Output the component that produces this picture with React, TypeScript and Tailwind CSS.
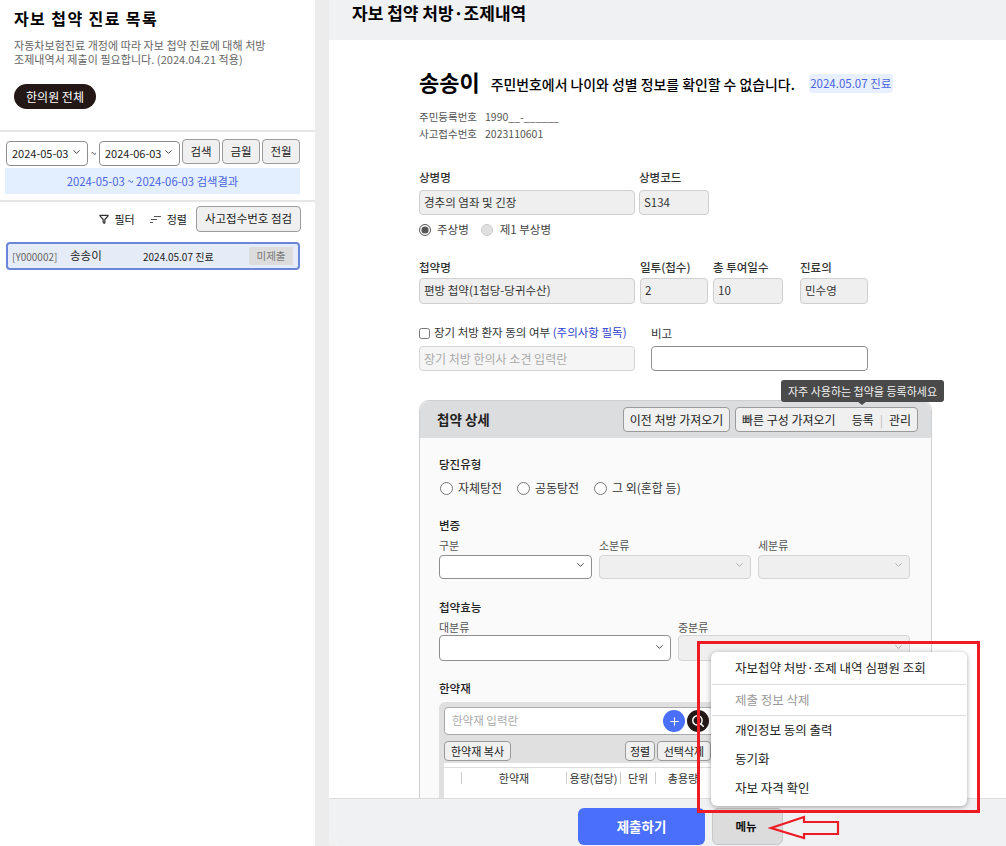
import { ChevronDown, Filter, Plus, Search } from "lucide-react"

const inputBase = "h-full w-full rounded-[4px] border px-[6px] text-[12px] outline-none"

function ReadBox({ value, className }: { value: string; className: string }) {
  return (
    <div className={`flex items-center rounded-[4px] border border-[#cfcfcf] bg-[#efefef] px-[4px] text-[11.5px] text-[#333] ${className}`}>
      {value}
    </div>
  )
}

function Field({ label, className, value, tall }: { label: string; className: string; value: string; tall?: boolean }) {
  return (
    <div className={className}>
      <div className={`h-[17px] text-[11.5px] font-medium leading-[17px] text-[#333] ${tall ? "mb-[2px]" : "mb-[4px]"}`}>{label}</div>
      <ReadBox value={value} className={`w-full ${tall ? "h-[26px]" : "h-[25px]"}`} />
    </div>
  )
}

function GrayButton({ children, className = "" }: { children: React.ReactNode; className?: string }) {
  return (
    <button className={`flex items-center justify-center rounded-[4px] border border-[#9a9a9a] bg-[#f0f0f0] text-[12px] text-[#222] ${className}`}>
      {children}
    </button>
  )
}

function Dropdown({ disabled, value, className }: { disabled?: boolean; value?: string; className: string }) {
  return (
    <div className={`relative ${className}`}>
      <select
        disabled={disabled}
        className={`h-full w-full appearance-none rounded-[4px] border pl-[5px] text-[11px] text-[#222] ${disabled ? "border-[#d5d5d5] bg-[#efefef]" : "border-[#8f8f8f] bg-white"}`}
      >
        {value && <option>{value}</option>}
      </select>
      <ChevronDown
        size={11}
        strokeWidth={2}
        className={`pointer-events-none absolute right-[6px] top-1/2 -translate-y-1/2 ${disabled ? "text-[#aaa]" : "text-[#333]"}`}
      />
    </div>
  )
}

function SelectBox({ label, disabled, className }: { label: string; disabled?: boolean; className: string }) {
  return (
    <div className={className}>
      <div className="h-[16px] text-[11px] leading-[16px] text-[#555]">{label}</div>
      <Dropdown disabled={disabled} className="h-[24px] w-full" />
    </div>
  )
}

function Sidebar() {
  return (
    <aside className="flex w-[315px] shrink-0 flex-col bg-white">
      <div className="h-[132px] border-b-2 border-[#e6e6e6] pl-[14px] pt-[7px]">
        <h1 className="text-[16px] font-bold leading-[22px] tracking-[1.4px] text-black">자보 첩약 진료 목록</h1>
        <p className="mt-[9px] text-[11px] leading-[14px] tracking-[0.05px] text-[#666]">
          자동차보험진료 개정에 따라 자보 첩약 진료에 대해 처방
          <br />
          조제내역서 제출이 필요합니다. (2024.04.21 적용)
        </p>
        <button className="mt-[18px] flex h-[25px] w-[82px] items-center justify-center rounded-full bg-[#231815] text-[12px] text-white">
          한의원 전체
        </button>
      </div>
      <div className="flex h-[32px] items-end gap-[2px] pl-[6px]">
        <Dropdown value="2024-05-03" className="h-[25px] w-[82px]" />
        <span className="w-[7px] text-center text-[10px] leading-[22px] text-[#555]">~</span>
        <Dropdown value="2024-06-03" className="h-[25px] w-[81px]" />
        <GrayButton className="h-[25px] w-[38px] !text-[11.5px]">검색</GrayButton>
        <GrayButton className="h-[25px] w-[38px] !text-[11.5px]">금월</GrayButton>
        <GrayButton className="h-[25px] w-[38px] !text-[11.5px]">전월</GrayButton>
      </div>
      <div className="ml-[5px] mt-[4px] flex h-[26px] w-[295px] items-center justify-center bg-[#e3efff] text-[11.3px] text-[#4a63e0]">
        2024-05-03 ~ 2024-06-03 검색결과
      </div>
      <div className="mt-[6px] flex h-[32px] items-end justify-end border-t-2 border-[#e6e6e6] pr-[14px]">
        <div className="flex items-center gap-[4px] text-[11px] text-[#222]">
          <Filter size={10} strokeWidth={3} className="text-[#333]" />
          <span className="ml-[2px]">필터</span>
          <svg width="11" height="8" viewBox="0 0 11 8" className="ml-[11px]">
            <path d="M4 1.5h7M1 4.5h6M0 7.5h3" stroke="#555" strokeWidth="1" fill="none" />
          </svg>
          <span className="ml-[2px]">정렬</span>
          <GrayButton className="ml-[5px] h-[26px] w-[105px] !text-[11.5px]">사고접수번호 점검</GrayButton>
        </div>
      </div>
      <div className="ml-[6px] mt-[10px] flex h-[28px] w-[294px] items-center rounded-[4px] border-2 border-[#6a86d8] bg-[#e6ecf7] pl-[4px]">
        <span className="w-[58px] text-[10px] text-[#666]">[Y000002]</span>
        <span className="w-[73px] text-[11.5px] text-[#222]">송송이</span>
        <span className="w-[106px] text-[10px] text-[#222]">2024.05.07 진료</span>
        <span className="flex h-[18px] w-[44px] items-center justify-center bg-[#dcdcdc] text-[10.5px] text-[#777]">미제출</span>
      </div>
    </aside>
  )
}

function PrescriptionForm() {
  return (
    <div className="w-[513px]">
      <div className="flex h-[32px] items-end">
        <span className="text-[22px] font-bold leading-[30px] text-black">송송이</span>
        <span className="ml-[11px] text-[13.9px] font-medium leading-[24px] text-black">주민번호에서 나이와 성별 정보를 확인할 수 없습니다.</span>
        <span className="mb-[3px] ml-[14px] flex h-[19px] w-[84px] items-center justify-center rounded-[4px] bg-[#e8f0ff] text-[11.5px] text-[#4a63e0]">2024.05.07 진료</span>
      </div>
      <div className="mt-[12px] text-[10.5px] leading-[17px] text-[#555]">
        <div className="flex"><span className="w-[66px]">주민등록번호</span><span>1990__-______</span></div>
        <div className="flex"><span className="w-[66px]">사고접수번호</span><span>2023110601</span></div>
      </div>

      <div className="mt-[27px] flex gap-[4px]">
        <Field label="상병명" className="w-[216px]" value="경추의 염좌 및 긴장" />
        <Field label="상병코드" className="w-[70px]" value="S134" />
      </div>
      <div className="mt-[7px] flex h-[16px] items-center text-[11.5px] text-[#444]">
        <input type="radio" checked readOnly className="size-[12px] accent-[#555]" />
        <span className="ml-[6px]">주상병</span>
        <input type="radio" disabled className="ml-[12px] size-[12px] appearance-none rounded-full border border-[#ccc] bg-[#e0e0e0]" />
        <span className="ml-[7px]">제1 부상병</span>
      </div>

      <div className="mt-[21px] flex">
        <Field tall label="첩약명" className="w-[216px]" value="편방 첩약(1첩당-당귀수산)" />
        <Field tall label="일투(첩수)" className="ml-[5px] w-[68px]" value="2" />
        <Field tall label="총 투여일수" className="ml-[5px] w-[70px]" value="10" />
        <Field tall label="진료의" className="ml-[17px] w-[68px]" value="민수영" />
      </div>

      <div className="mt-[20px] flex">
        <div className="w-[216px]">
          <label className="flex h-[18px] items-center gap-[4px] text-[11.5px] text-[#333]">
            <input type="checkbox" className="size-[11px]" />
            <span>장기 처방 환자 동의 여부 <span className="text-[#2f3fd0]">(주의사항 필독)</span></span>
          </label>
          <div className="mt-[3px] h-[25px]">
            <input disabled placeholder="장기 처방 한의사 소견 입력란" className={`${inputBase} border-[#d5d5d5] bg-[#f5f5f5] !px-[4px] text-[11.5px] placeholder:text-[#aaa]`} />
          </div>
        </div>
        <div className="ml-[16px] w-[217px]">
          <div className="h-[18px] text-[11.5px] leading-[18px] text-[#333]">비고</div>
          <div className="mt-[3px] h-[25px]">
            <input className={`${inputBase} border-[#8f8f8f] bg-white`} />
          </div>
        </div>
      </div>

      <section className="mt-[30px] rounded-t-[10px] border border-[#cfcfcf] bg-[#fafafa]">
        <div className="flex h-[37px] items-center rounded-t-[10px] bg-[#dcdddf] pl-[17px] pr-[13px]">
          <h2 className="flex-1 text-[13.5px] font-bold text-[#222]">첩약 상세</h2>
          <GrayButton className="h-[25px] w-[107px]">이전 처방 가져오기</GrayButton>
          <GrayButton className="ml-[5px] h-[25px] w-[183px]">
            빠른 구성 가져오기
            <span className="ml-[16px]">등록</span>
            <span className="mx-[6px] text-[#bbb]">|</span>
            <span>관리</span>
          </GrayButton>
        </div>
        <div className="pl-[19px] pr-[21px] pt-[18px]">
          <h3 className="h-[17px] text-[11.5px] font-medium leading-[17px] text-[#222]">당진유형</h3>
          <div className="ml-[1px] mt-[5px] flex h-[20px] items-center text-[12px] text-[#333]">
            <input type="radio" name="brew" className="size-[13px]" />
            <span className="ml-[5px] w-[59px]">자체탕전</span>
            <input type="radio" name="brew" className="size-[13px]" />
            <span className="ml-[5px] w-[59px]">공동탕전</span>
            <input type="radio" name="brew" className="size-[13px]" />
            <span className="ml-[5px]">그 외(혼합 등)</span>
          </div>

          <h3 className="mt-[19px] h-[17px] text-[11.5px] font-medium leading-[17px] text-[#222]">변증</h3>
          <div className="mt-[3px] flex gap-[7px]">
            <SelectBox label="구분" className="w-[153px]" />
            <SelectBox label="소분류" disabled className="w-[152px]" />
            <SelectBox label="세분류" disabled className="w-[152px]" />
          </div>

          <h3 className="mt-[22px] h-[17px] text-[11.5px] font-medium leading-[17px] text-[#222]">첩약효능</h3>
          <div className="mt-[3px] flex gap-[7px]">
            <div className="w-[232px]">
              <div className="h-[15px] text-[11px] leading-[16px] text-[#555]">대분류</div>
              <Dropdown className="h-[26px] w-full" />
            </div>
            <div className="w-[232px]">
              <div className="h-[15px] text-[11px] leading-[16px] text-[#555]">중분류</div>
              <Dropdown disabled className="h-[26px] w-full" />
            </div>
          </div>

          <h3 className="mt-[20px] h-[17px] text-[11.5px] font-medium leading-[17px] text-[#222]">한약재</h3>
          <div className="mt-[5px] rounded-[6px] bg-[#e0e0e0] px-[5px] pt-[5px]">
            <div className="flex h-[28px] items-center rounded-[4px] border border-[#aaa] bg-white pl-[7px] pr-[2px] text-[11.5px] text-[#aaa]">
              <span className="flex-1">한약재 입력란</span>
              <span className="flex size-[22px] items-center justify-center rounded-full bg-[#4a6ffb]"><Plus size={13} className="text-white" /></span>
              <span className="ml-[2px] flex size-[22px] items-center justify-center rounded-full bg-[#231815]"><Search size={14} strokeWidth={2.5} className="text-white" /></span>
              <span className="w-[193px]" />
            </div>
            <div className="mt-[6px] flex h-[20px]">
              <GrayButton className="w-[67px] !text-[11px]">한약재 복사</GrayButton>
              <div className="w-[115px]" />
              <GrayButton className="ml-[-1px] w-[30px] !text-[11px]">정렬</GrayButton>
              <GrayButton className="ml-[2px] w-[54px] !text-[11px]">선택삭제</GrayButton>
            </div>
            <div className="mt-[2px] h-[40px] bg-white pt-[4px]">
              <div className="flex border-t border-[#ddd] pt-[4px] text-center text-[11px] text-[#333]">
                <span className="w-[17px]" />
                <span className="h-[12px] w-[106px] border-x border-[#ccc] leading-[12px]">한약재</span>
                <span className="h-[12px] w-[53px] leading-[12px]">용량(첩당)</span>
                <span className="h-[12px] w-[36px] border-x border-[#ccc] leading-[12px]">단위</span>
                <span className="h-[12px] w-[54px] leading-[12px]">총용량</span>
              </div>
            </div>
          </div>
        </div>
      </section>
    </div>
  )
}

function MenuPopup() {
  const itemClass = "flex items-center pl-[24px] text-[12.5px]"
  return (
    <div className="absolute left-[711px] top-[652px] z-20 h-[154px] w-[256px] rounded-[6px] bg-white pt-[1px] text-[#222] shadow-[0_1px_5px_rgba(0,0,0,0.35)]">
      <div className={`${itemClass} h-[31px]`}>자보첩약 처방·조제 내역 심평원 조회</div>
      <div className="mx-[1px] border-t border-[#ddd]" />
      <div className={`${itemClass} h-[30px] text-[#999]`}>제출 정보 삭제</div>
      <div className="mx-[1px] border-t border-[#ddd]" />
      <div className={`${itemClass} h-[29px]`}>개인정보 동의 출력</div>
      <div className={`${itemClass} h-[29px]`}>동기화</div>
      <div className={`${itemClass} h-[29px]`}>자보 자격 확인</div>
    </div>
  )
}

export default function App() {
  return (
    <div className="relative flex h-[846px] w-[1006px] overflow-hidden bg-[#efefef] [font-family:'Noto_Sans_CJK_KR','Liberation_Sans',sans-serif]">
      <Sidebar />
      <div className="w-[14px] shrink-0 bg-[#ececec]" />
      <main className="flex min-w-0 flex-1 flex-col overflow-hidden rounded-bl-[10px] bg-white">
        <div className="h-[40px] shrink-0 bg-[#f0f1f3] pl-[23px]">
          <h1 className="text-[17px] font-bold leading-[25px] text-black">자보 첩약 처방·조제내역</h1>
        </div>
        <div className="min-h-0 flex-1 overflow-hidden pl-[90px] pt-[24px]">
          <PrescriptionForm />
        </div>
        <div className="flex h-[48px] shrink-0 items-start gap-[7px] border-t border-[#dcdcdc] bg-[#f0f1f3] pl-[249px] pt-[9px]">
          <button className="h-[37px] w-[127px] rounded-[6px] bg-[#4a6ffb] text-[13.5px] font-bold text-white">제출하기</button>
          <button className="h-[37px] w-[71px] rounded-[6px] border border-[#c8c8c8] bg-[#dcdcdc] pr-[3px] text-[11.5px] font-bold text-[#111]">메뉴</button>
        </div>
      </main>

      {/* 툴팁 */}
      <div className="absolute left-[781px] top-[380px] z-10 flex h-[22px] w-[163px] items-center justify-center rounded-[3px] bg-[#4a4a4a] text-[11px] text-[#f0f0f0]">
        자주 사용하는 첩약을 등록하세요
        <span className="absolute left-[76px] top-[21px] size-0 border-x-[5px] border-t-[4px] border-x-transparent border-t-[#4a4a4a]" />
      </div>

      <MenuPopup />

      {/* 빨간 주석 */}
      <div className="pointer-events-none absolute left-[697px] top-[641px] z-30 h-[172px] w-[283px] border-[3px] border-[#ed1c24]" />
      <svg className="absolute left-[768px] top-[812px] z-30" width="74" height="30" viewBox="0 0 74 30">
        <path d="M3 16 L36 5 V10 H70 V22 H36 V26 Z" fill="none" stroke="#ed1c24" strokeWidth="2.2" />
      </svg>
    </div>
  )
}
